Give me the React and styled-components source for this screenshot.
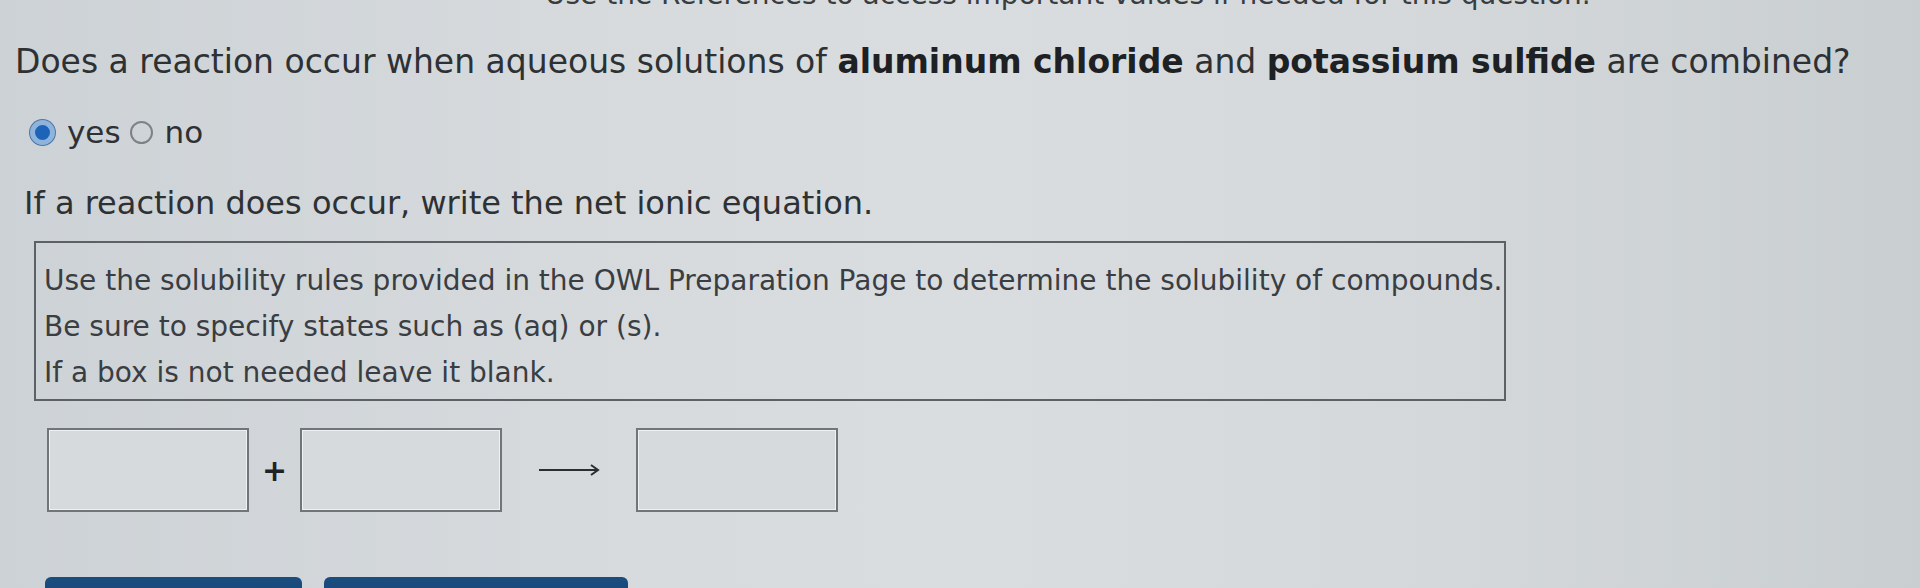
import React from 'react';
import styled, { createGlobalStyle } from 'styled-components';

const GlobalStyle = createGlobalStyle`
  html, body {
    margin: 0;
    padding: 0;
  }
  body {
    width: 1920px;
    height: 588px;
    overflow: hidden;
    font-family: "DejaVu Sans", Verdana, sans-serif;
    color: #2a2d30;
    background: linear-gradient(90deg, #cdd2d6 0%, #d6dadd 30%, #d9dde0 50%, #d4d8db 75%, #c9ced1 100%);
  }
`;

const Page = styled.div`
  height: 588px;
  overflow: hidden;
`;

/* the line above the question is cut off by the top edge of the window */
const TopNote = styled.div`
  margin: -22px 0 0 545px;
  font-size: 28px;
  line-height: 34px;
  color: #3a3d40;
  white-space: nowrap;
`;

const Question = styled.p`
  margin: 30px 0 0 15px;
  font-size: 33px;
  line-height: 40px;
  color: #2e3134;
  white-space: nowrap;

  b {
    color: #1e2124;
    font-weight: bold;
  }
`;

const RadioRow = styled.div`
  display: flex;
  align-items: center;
  margin: 30px 0 0 30px;
  height: 40px;
  font-size: 31px;
`;

const Option = styled.label`
  display: flex;
  align-items: center;
  gap: 12px;
  margin-right: 9px;
  color: #2e3134;
`;

const Radio = styled.span`
  width: ${(p) => (p.$checked ? 25 : 23)}px;
  height: ${(p) => (p.$checked ? 25 : 23)}px;
  border-radius: 50%;
  box-sizing: border-box;
  border: ${(p) => (p.$checked ? '5px solid #8fb4dc' : '2px solid #7d8286')};
  background: ${(p) => (p.$checked ? '#1d64b8' : 'transparent')};
  box-shadow: ${(p) => (p.$checked ? '0 0 0 1px #4d77a6' : 'none')};
`;

const Prompt = styled.p`
  margin: 31px 0 0 24px;
  font-size: 32px;
  line-height: 40px;
  color: #2e3134;
`;

const InfoBox = styled.div`
  margin: 18px 0 0 34px;
  width: 1472px;
  height: 160px;
  box-sizing: border-box;
  border: 2px solid #5c6166;
  padding: 15px 0 0 8px;
  font-size: 28px;
  line-height: 46px;
  color: #3a3d41;
  white-space: nowrap;
`;

const Equation = styled.div`
  display: flex;
  align-items: center;
  margin: 27px 0 0 47px;
  height: 84px;
`;

const AnswerBox = styled.div`
  width: 202px;
  height: 84px;
  box-sizing: border-box;
  border: 2px solid #70757a;
  box-shadow: inset 0 0 0 1px #eef1f3;
  background: #d6dadd;
`;

const Plus = styled.span`
  width: 51px;
  text-align: center;
  font-size: 30px;
  font-weight: bold;
  color: #1f2226;
`;

const Arrow = styled.span`
  display: flex;
  justify-content: center;
  width: 134px;
`;

const ButtonRow = styled.div`
  display: flex;
  gap: 22px;
  margin: 65px 0 0 45px;
`;

const ActionButton = styled.button`
  width: ${(p) => p.$w}px;
  height: 40px;
  border: none;
  border-radius: 6px 6px 0 0;
  background: linear-gradient(180deg, #1b4d80 0%, #174470 100%);
`;

export default function App() {
  return (
    <Page>
      <GlobalStyle />
      <TopNote>Use the References to access important values if needed for this question.</TopNote>
      <Question>
        Does a reaction occur when aqueous solutions of <b>aluminum chloride</b> and{' '}
        <b>potassium sulfide</b> are combined?
      </Question>
      <RadioRow>
        <Option>
          <Radio $checked />
          yes
        </Option>
        <Option>
          <Radio />
          no
        </Option>
      </RadioRow>
      <Prompt>If a reaction does occur, write the net ionic equation.</Prompt>
      <InfoBox>
        <div>Use the solubility rules provided in the OWL Preparation Page to determine the solubility of compounds.</div>
        <div>Be sure to specify states such as (aq) or (s).</div>
        <div>If a box is not needed leave it blank.</div>
      </InfoBox>
      <Equation>
        <AnswerBox />
        <Plus>+</Plus>
        <AnswerBox />
        <Arrow>
          <svg width="62" height="14" viewBox="0 0 62 14">
            <path d="M1 7 H60 M53 2 L60 7 L53 12" fill="none" stroke="#2a2d31" strokeWidth="2" />
          </svg>
        </Arrow>
        <AnswerBox />
      </Equation>
      <ButtonRow>
        <ActionButton $w={257} />
        <ActionButton $w={304} />
      </ButtonRow>
    </Page>
  );
}
